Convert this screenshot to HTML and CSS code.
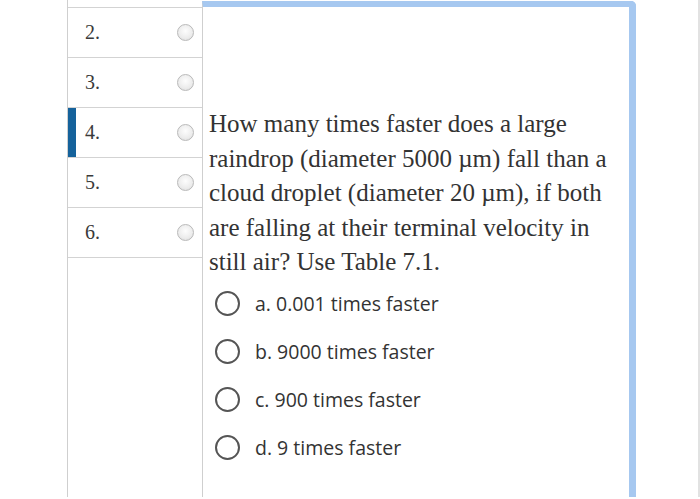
FILE: index.html
```html
<!DOCTYPE html>
<html lang="en">
<head>
    <meta charset="UTF-8">
    <meta name="viewport" content="width=device-width, initial-scale=1.0">
    <title>Quiz Question</title>
    <link rel="stylesheet" href="styles.css">
</head>
<body>
    <div class="page">
        <div class="quiz">
            <ul class="question-nav">
                <li class="nav-item"></li>
                <li class="nav-item"><span class="nav-num">2.</span><span class="nav-dot"></span></li>
                <li class="nav-item"><span class="nav-num">3.</span><span class="nav-dot"></span></li>
                <li class="nav-item active"><span class="nav-num">4.</span><span class="nav-dot"></span></li>
                <li class="nav-item"><span class="nav-num">5.</span><span class="nav-dot"></span></li>
                <li class="nav-item"><span class="nav-num">6.</span><span class="nav-dot"></span></li>
            </ul>

            <div class="question-panel">
                <p class="question-text">
                    How many times faster does a large<br>
                    raindrop (diameter 5000 µm) fall than a<br>
                    cloud droplet (diameter 20 µm), if both<br>
                    are falling at their terminal velocity in<br>
                    still air? Use Table 7.1.
                </p>

                <ul class="answers">
                    <li class="answer"><span class="radio"></span>a. 0.001 times faster</li>
                    <li class="answer"><span class="radio"></span>b. 9000 times faster</li>
                    <li class="answer"><span class="radio"></span>c. 900 times faster</li>
                    <li class="answer"><span class="radio"></span>d. 9 times faster</li>
                </ul>
            </div>
        </div>
    </div>
</body>
</html>
```

FILE: styles.css
```css
html, body {
    margin: 0;
    padding: 0;
    height: 100%;
    background-color: #fff;
    overflow: hidden;
}

.page {
    height: 497px;
    border-right: 2px solid #e2e2e2;
    box-sizing: border-box;
    width: 700px;
}

.quiz {
    display: flex;
    height: 100%;
    margin-left: 67px;
}

/* left column with question numbers */
.question-nav {
    list-style: none;
    margin: -42px 0 0 0;
    padding: 0;
    width: 134px;
    border-left: 1px solid #cfcfcf;
    flex-shrink: 0;
}

.nav-item {
    position: relative;
    display: flex;
    align-items: center;
    justify-content: space-between;
    height: 49px;
    padding: 0 8px 0 17px;
    border-bottom: 1px solid #d3d3d3;
    font-family: "Liberation Serif", "Times New Roman", serif;
    font-size: 20px;
    color: #3a3a3a;
}

.nav-item.active::before {
    content: "";
    position: absolute;
    left: 0;
    top: 0;
    bottom: 0;
    width: 8px;
    background-color: #15629b;
}

.nav-dot {
    box-sizing: border-box;
    width: 17px;
    height: 17px;
    border-radius: 50%;
    border: 1px solid #b9b9b9;
    background: radial-gradient(circle at 50% 40%, #fdfdfd 0%, #ececec 60%, #d9d9d9 100%);
}

/* question area */
.question-panel {
    width: 420px;
    border-left: 1px solid #cfcfcf;
    border-top: 6px solid #a6c8f0;
    border-right: 7px solid #a6c8f0;
    border-top-right-radius: 5px;
    margin-top: 1px;
    padding: 100px 0 0 6px;
}

.question-text {
    margin: 0;
    font-family: "Liberation Serif", "Times New Roman", serif;
    font-size: 25px;
    line-height: 34.5px;
    color: #333;
    white-space: nowrap;
}

.answers {
    list-style: none;
    margin: 0;
    padding: 0 0 0 6px;
}

.answer {
    display: flex;
    align-items: center;
    height: 48px;
    font-family: "Open Sans", sans-serif;
    font-size: 19.5px;
    color: #333;
}

.radio {
    box-sizing: border-box;
    width: 25px;
    height: 25px;
    border: 2px solid #555;
    border-radius: 50%;
    margin-right: 15px;
    flex-shrink: 0;
}
```
